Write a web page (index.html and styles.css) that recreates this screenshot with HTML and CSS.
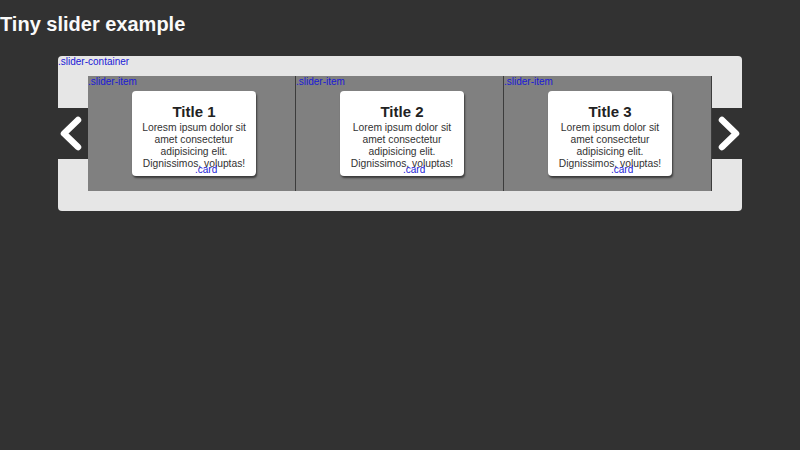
FILE: index.html
```html
<!DOCTYPE html>
<html lang="en">
<head>
<meta charset="utf-8">
<title>Tiny slider example</title>
<link rel="stylesheet" href="styles.css">
</head>
<body>
<h1 class="page-title">Tiny slider example</h1>
<div class="slider-container">
  <button class="arrow arrow-prev" aria-label="Previous">
    <svg width="30" height="51" viewBox="0 0 30 51"><polyline points="20,12 6,25.5 20,39" fill="none" stroke="#fff" stroke-width="6.5" stroke-linecap="round" stroke-linejoin="round"/></svg>
  </button>
  <div class="slider-track">
    <div class="slider-item">
      <div class="card">
        <h2 class="card-title">Title 1</h2>
        <p class="card-text">Loresm ipsum dolor sit amet consectetur adipisicing elit. Dignissimos, voluptas!</p>
      </div>
    </div>
    <div class="slider-item">
      <div class="card">
        <h2 class="card-title">Title 2</h2>
        <p class="card-text">Lorem ipsum dolor sit amet consectetur adipisicing elit. Dignissimos, voluptas!</p>
      </div>
    </div>
    <div class="slider-item">
      <div class="card">
        <h2 class="card-title">Title 3</h2>
        <p class="card-text">Lorem ipsum dolor sit amet consectetur adipisicing elit. Dignissimos, voluptas!</p>
      </div>
    </div>
  </div>
  <button class="arrow arrow-next" aria-label="Next">
    <svg width="30" height="51" viewBox="0 0 30 51"><polyline points="10,12 24,25.5 10,39" fill="none" stroke="#fff" stroke-width="6.5" stroke-linecap="round" stroke-linejoin="round"/></svg>
  </button>
</div>
</body>
</html>
```

FILE: styles.css
```css
html, body {
  margin: 0;
  padding: 0;
}
body {
  background: #323232;
  font-family: "Liberation Sans", Arial, sans-serif;
  color: #333;
}
.page-title {
  margin: 13px 0 0 0;
  font-size: 20px;
  line-height: 23px;
  color: #fafafa;
  font-weight: bold;
}
.slider-container {
  position: relative;
  box-sizing: border-box;
  width: 684px;
  margin: 20px 0 0 58px;
  padding: 20px 30px;
  background: #e6e6e6;
  border-radius: 4px;
}
.slider-container::before {
  content: ".slider-container";
  position: absolute;
  top: 0;
  left: 0;
  font-size: 10px;
  line-height: 11px;
  color: #1a1ad6;
}
.slider-track {
  display: flex;
}
.slider-item {
  position: relative;
  width: 163px;
  padding: 15px 0 15px 44px;
  background: #808080;
  border-right: 1px solid #3c3c3c;
}
.slider-item::before {
  content: ".slider-item";
  position: absolute;
  top: 0;
  left: 0;
  font-size: 10px;
  line-height: 11px;
  color: #1a1ad6;
}
.card {
  position: relative;
  box-sizing: border-box;
  width: 124px;
  height: 85px;
  padding: 12px 3px 0;
  background: #fff;
  border-radius: 4px;
  box-shadow: 1px 2px 2px rgba(0, 0, 0, 0.55);
  text-align: center;
}
.card::after {
  content: ".card";
  position: absolute;
  left: calc(50% + 1px);
  bottom: 1px;
  font-size: 10px;
  line-height: 11px;
  color: #1a1ad6;
}
.card-title {
  margin: 0 0 2px;
  font-size: 15px;
  line-height: 17px;
  color: #222;
}
.card-text {
  margin: 0;
  font-size: 10.3px;
  line-height: 11.9px;
  color: #333;
}
.arrow {
  position: absolute;
  top: 52px;
  width: 30px;
  height: 51px;
  padding: 0;
  margin: 0;
  border: 0;
  background: #323232;
  display: flex;
  align-items: center;
  justify-content: center;
  cursor: pointer;
}
.arrow-prev {
  left: 0;
}
.arrow-next {
  right: 0;
}
.arrow svg {
  display: block;
}
```
